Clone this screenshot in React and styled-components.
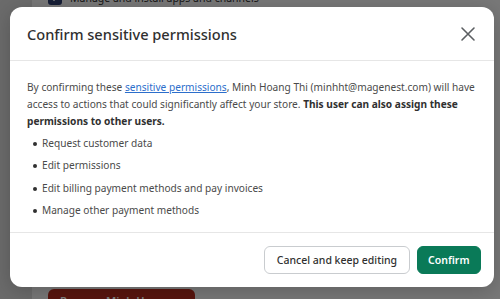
import React from "react";
import styled, { createGlobalStyle } from "styled-components";

const Global = createGlobalStyle`
  html, body { margin: 0; padding: 0; }
  body { font-family: "Noto Sans", "Open Sans", sans-serif; }
  * { box-sizing: border-box; }
`;

const Page = styled.div`
  position: relative;
  width: 500px;
  height: 299px;
  overflow: hidden;
  display: flex;
  background: #f1f1f1;
`;

const Sidebar = styled.div`
  width: 32px;
  flex: none;
  background: #d6d6d6;
`;

const Main = styled.div`
  flex: 1;
  display: flex;
  flex-direction: column;
  justify-content: space-between;
  padding: 0 0 0 16px;
  margin-top: -9px;
  margin-bottom: -12px;
`;

const CheckRow = styled.div`
  display: flex;
  align-items: center;
  gap: 8px;
  font-size: 10.5px;
  color: #303030;
`;

const Check = styled.span`
  width: 14px;
  height: 14px;
  border-radius: 3px;
  background: #2a3a6a;
  display: inline-flex;
  align-items: center;
  justify-content: center;
`;

const DangerButton = styled.div`
  width: 147px;
  height: 22px;
  border-radius: 6px;
  background: #b02a1c;
  color: #fff;
  font-size: 11px;
  font-weight: 600;
  padding: 4px 12px;
`;

const Overlay = styled.div`
  position: absolute;
  inset: 0;
  background: rgba(0, 0, 0, 0.5);
`;

const Modal = styled.div`
  position: absolute;
  left: 10px;
  top: 7px;
  width: 484px;
  height: 280px;
  background: #fff;
  border-radius: 12px;
  display: flex;
  flex-direction: column;
  overflow: hidden;
  box-shadow: 0 4px 20px rgba(0, 0, 0, 0.2);
`;

const Header = styled.div`
  height: 54px;
  flex: none;
  display: flex;
  align-items: center;
  justify-content: space-between;
  padding: 0 16px 0 17px;
  border-bottom: 1px solid #e6e6e6;
`;

const Title = styled.h2`
  margin: 0;
  font-size: 14.6px;
  font-weight: 500;
  color: #303030;
`;

const CloseButton = styled.button`
  border: none;
  background: none;
  padding: 0;
  width: 20px;
  height: 20px;
  display: flex;
  align-items: center;
  justify-content: center;
  color: #5c5f62;
`;

const Body = styled.div`
  flex: 1;
  padding: 18px 17px 0 17px;
  font-size: 10.15px;
  line-height: 17px;
  color: #4a4a4a;
`;

const Paragraph = styled.p`
  margin: 0;
`;

const Link = styled.a`
  color: #2c6ecb;
  text-decoration: underline;
`;

const Strong = styled.strong`
  font-weight: 700;
  color: #303030;
`;

const List = styled.ul`
  margin: 5px 0 0 0;
  padding: 0 0 0 15px;
  list-style: none;
  display: flex;
  flex-direction: column;
  gap: 5.3px;
`;

const Item = styled.li`
  position: relative;
  line-height: 17px;
  &::before {
    content: "";
    position: absolute;
    left: -9px;
    top: 7px;
    width: 4px;
    height: 4px;
    border-radius: 50%;
    background: #303030;
  }
`;

const Footer = styled.div`
  flex: none;
  height: 55px;
  border-top: 1px solid #e6e6e6;
  display: flex;
  align-items: center;
  justify-content: flex-end;
  gap: 7px;
  padding: 0 13px;
`;

const Button = styled.button`
  height: 28px;
  border-radius: 6px;
  font-family: inherit;
  font-size: 10.5px;
  padding: 0 ${(p) => (p.$primary ? "10.5px" : "11.5px")};
  cursor: pointer;
  border: 1px solid ${(p) => (p.$primary ? "#0a7a58" : "#c9cccf")};
  background: ${(p) => (p.$primary ? "#0a7a58" : "#fff")};
  color: ${(p) => (p.$primary ? "#fff" : "#303030")};
  font-weight: ${(p) => (p.$primary ? 600 : 500)};
`;

export default function App() {
  return (
    <>
      <Global />
      <Page>
        <Sidebar />
        <Main>
          <CheckRow>
            <Check>
              <svg width="10" height="10" viewBox="0 0 10 10">
                <path d="M2 5.2l2 2 4-4.4" stroke="#fff" strokeWidth="1.5" fill="none" />
              </svg>
            </Check>
            Manage and install apps and channels
          </CheckRow>
          <DangerButton>Remove Minh Hoang Thi</DangerButton>
        </Main>
        <Overlay />
        <Modal>
          <Header>
            <Title>Confirm sensitive permissions</Title>
            <CloseButton aria-label="Close">
              <svg width="16" height="16" viewBox="0 0 16 16">
                <path d="M2 2l12 12M14 2L2 14" stroke="currentColor" strokeWidth="1.6" strokeLinecap="round" />
              </svg>
            </CloseButton>
          </Header>
          <Body>
            <Paragraph>
              By confirming these <Link href="#">sensitive permissions</Link>, Minh Hoang Thi
              (minhht@magenest.com) will have access to actions that could significantly affect
              your store. <Strong>This user can also assign these permissions to other users.</Strong>
            </Paragraph>
            <List>
              <Item>Request customer data</Item>
              <Item>Edit permissions</Item>
              <Item>Edit billing payment methods and pay invoices</Item>
              <Item>Manage other payment methods</Item>
            </List>
          </Body>
          <Footer>
            <Button>Cancel and keep editing</Button>
            <Button $primary>Confirm</Button>
          </Footer>
        </Modal>
      </Page>
    </>
  );
}
